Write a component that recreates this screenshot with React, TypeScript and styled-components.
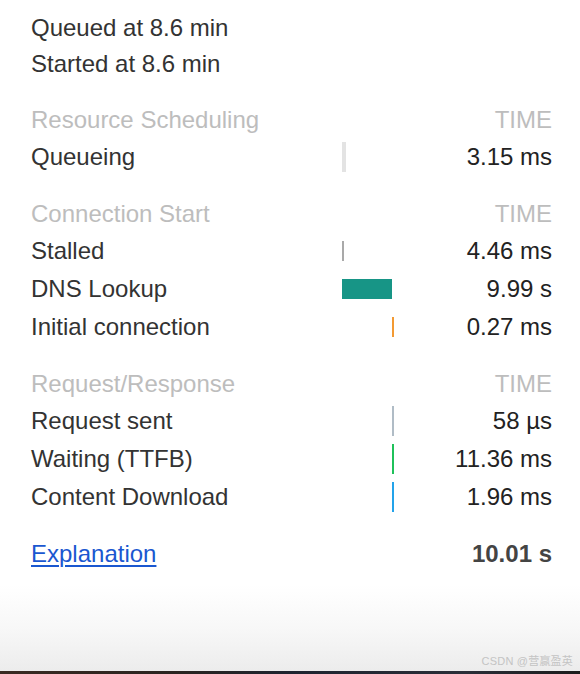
import React from "react";
import styled, { createGlobalStyle } from "styled-components";

const GlobalStyle = createGlobalStyle`
  html, body { margin: 0; padding: 0; background: #ffffff; }
  body { font-family: "Liberation Sans", Arial, Helvetica, sans-serif; }
`;

const Page = styled.div`
  position: relative;
  width: 580px;
  height: 674px;
  display: flex;
  flex-direction: column;
  background: linear-gradient(to bottom, #ffffff 0px, #ffffff 585px, #f7f7f7 630px, #ececec 671px);
  overflow: hidden;
`;

const Content = styled.div`
  flex: 1;
  display: flex;
  flex-direction: column;
  gap: 20px;
  padding: 10px 28px 0 31px;
`;

const Block = styled.div`
  display: flex;
  flex-direction: column;
`;

const InfoLine = styled.div`
  height: 36px;
  line-height: 36px;
  font-size: 24px;
  color: #333333;
`;

const Row = styled.div<{ $h?: number }>`
  display: grid;
  grid-template-columns: 311px 52px 1fr;
  align-items: center;
  height: ${(p) => p.$h ?? 38}px;
  font-size: 24px;
`;

const Label = styled.div<{ $muted?: boolean }>`
  color: ${(p) => (p.$muted ? "#bdbdbd" : "#333333")};
  white-space: nowrap;
`;

const Value = styled.div<{ $muted?: boolean; $bold?: boolean }>`
  text-align: right;
  color: ${(p) => (p.$muted ? "#bdbdbd" : p.$bold ? "#444444" : "#222222")};
  font-weight: ${(p) => (p.$bold ? 700 : 400)};
  white-space: nowrap;
`;

const Timeline = styled.div`
  position: relative;
  height: 100%;
  display: flex;
  align-items: center;
`;

const Bar = styled.div<{ $color: string; $h: number }>`
  position: absolute;
  top: 50%;
  height: ${(p) => p.$h}px;
  transform: translateY(-50%);
  background: ${(p) => p.$color};
`;

const Link = styled.a`
  color: #1a57d0;
  text-decoration: underline;
  text-decoration-thickness: 2px;
  text-underline-offset: 3px;
  cursor: pointer;
`;

const BottomStrip = styled.div`
  height: 3px;
  background: linear-gradient(to right, #3a2a22 0%, #2a2420 30%, #1e2430 50%, #2a2e38 80%, #1c1c1c 100%);
`;

const Watermark = styled.div`
  position: absolute;
  right: 7px;
  bottom: 6px;
  font-size: 11px;
  color: #c4c4c4;
  font-family: "Liberation Sans", "Noto Sans CJK SC", sans-serif;
  letter-spacing: 0.2px;
`;

type Entry = {
  label: string;
  value: string;
  left: number;
  width: number;
  height: number;
  color: string;
};

type Section = { title: string; rows: Entry[] };

const sections: Section[] = [
  {
    title: "Resource Scheduling",
    rows: [
      { label: "Queueing", value: "3.15 ms", left: 0, width: 4, height: 30, color: "#e3e3e3" },
    ],
  },
  {
    title: "Connection Start",
    rows: [
      { label: "Stalled", value: "4.46 ms", left: 0, width: 2, height: 20, color: "#a9a9a9" },
      { label: "DNS Lookup", value: "9.99 s", left: 0, width: 50, height: 20, color: "#179586" },
      { label: "Initial connection", value: "0.27 ms", left: 50, width: 2, height: 20, color: "#f39a33" },
    ],
  },
  {
    title: "Request/Response",
    rows: [
      { label: "Request sent", value: "58 µs", left: 50, width: 2, height: 30, color: "#b0bcc6" },
      { label: "Waiting (TTFB)", value: "11.36 ms", left: 50, width: 2, height: 30, color: "#1fc15a" },
      { label: "Content Download", value: "1.96 ms", left: 50, width: 2, height: 30, color: "#23a3ea" },
    ],
  },
];

export default function App() {
  return (
    <>
      <GlobalStyle />
      <Page>
        <Content>
          <Block>
            <InfoLine>Queued at 8.6 min</InfoLine>
            <InfoLine>Started at 8.6 min</InfoLine>
          </Block>
          {sections.map((s) => (
            <Block key={s.title}>
              <Row $h={36}>
                <Label $muted>{s.title}</Label>
                <div />
                <Value $muted>TIME</Value>
              </Row>
              {s.rows.map((r) => (
                <Row key={r.label}>
                  <Label>{r.label}</Label>
                  <Timeline>
                    <Bar
                      $color={r.color}
                      $h={r.height}
                      style={{ left: r.left, width: r.width }}
                    />
                  </Timeline>
                  <Value>{r.value}</Value>
                </Row>
              ))}
            </Block>
          ))}
          <Block>
            <Row $h={36}>
              <Label>
                <Link>Explanation</Link>
              </Label>
              <div />
              <Value $bold>10.01 s</Value>
            </Row>
          </Block>
        </Content>
        <BottomStrip />
        <Watermark>CSDN @营赢盈英</Watermark>
      </Page>
    </>
  );
}
